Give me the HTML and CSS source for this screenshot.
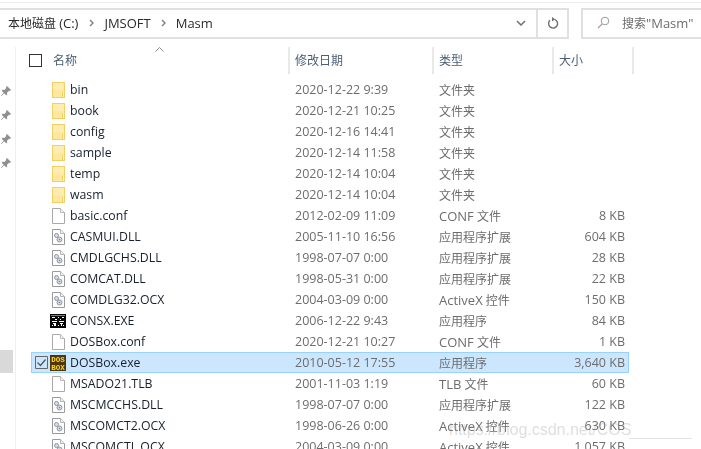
FILE: index.html
```html
<!DOCTYPE html>
<html lang="zh">
<head>
<meta charset="utf-8">
<title>Masm</title>
<link rel="stylesheet" href="styles.css">
</head>
<body>
<svg class="defs" width="0" height="0">
  <symbol id="folder" viewBox="0 0 13 16">
    <path d="M0 0h13v16H0z" fill="#f3d063"/>
    <path d="M1.100 1h10.900v14H1.100z" fill="#fee89f"/>
    <path d="M1.100 1h10.900v7H1.100z" fill="#feecb0"/>
    <path d="M10 10h1v5h-1z" fill="#f3d063"/>
    <path d="M11 9.500h1v5.500h-1z" fill="#fff4c8"/>
  </symbol>
  <symbol id="file" viewBox="0 0 13 16">
    <path d="M.5.500h8l4 4v11H.5z" fill="#fff" stroke="#a9a9a9"/>
    <path d="M8.500.500v4h4" fill="#f2f2f2" stroke="#bcbcbc"/>
  </symbol>
  <symbol id="dll" viewBox="0 0 13 16">
    <path d="M.5.500h8l4 4v11H.5z" fill="#fff" stroke="#9a9a9a"/>
    <path d="M8.500.500v4h4" fill="#f2f2f2" stroke="#b4b4b4"/>
    <circle cx="4.500" cy="6.500" r="2" fill="#d5dde6" stroke="#8c98a5"/>
    <circle cx="7.500" cy="10.500" r="2.500" fill="#d5dde6" stroke="#8c98a5"/>
    <circle cx="7.500" cy="10.500" r=".8" fill="#7c8895"/>
  </symbol>
  <symbol id="consx" viewBox="0 0 16 14">
    <path d="M0 0h16v14H0z" fill="#050505"/>
    <path d="M1 1h14v1H1z" fill="#5b7fe8"/>
    <path d="M2 3h3v1H2zM8 3h1v1H8zM12 3h2v1h-2zM5 5h2v1H5zM10 5h1v1h-1zM2 7h5v1H2zM9 7h5v1H9zM3 9h3v1H3zM10 9h3v1h-3zM4 10h2v2H4zM11 10h1v2h-1zM2 11h1v1H2zM8 11h1v1H8zM13 11h1v1h-1z" fill="#fff"/>
  </symbol>
  <symbol id="pin" viewBox="0 0 10 10">
    <path d="M6 0l4 4-1 1-1-.3-2 2 .2 1.800-.9.900L3.200 7.300.8 9.700 0 10l.3-.8 2.400-2.400L.6 4.700l.9-.9 1.800.2 2-2L5 1z" fill="#8f8f8f"/>
  </symbol>
  <symbol id="chev" viewBox="0 0 5 8">
    <path d="M1 1l3 3-3 3" fill="none" stroke="#7f7f7f" stroke-width="1.400"/>
  </symbol>
</svg>

<div class="top-rule"></div>
<header class="toolbar">
  <nav class="address">
    <span class="crumb">本地磁盘 <span class="lat">(C:)</span></span>
    <svg class="chev"><use href="#chev"/></svg>
    <span class="crumb lat">JMSOFT</span>
    <svg class="chev"><use href="#chev"/></svg>
    <span class="crumb lat">Masm</span>
    <svg class="drop" width="10" height="6" viewBox="0 0 10 6"><path d="M1 1l4 4 4-4" fill="none" stroke="#707070" stroke-width="1.500"/></svg>
  </nav>
  <button class="refresh" type="button" aria-label="刷新">
    <svg width="12" height="13" viewBox="0 0 12 13"><path d="M7.500 2.300A4.500 4.500 0 1 1 3 3.300" fill="none" stroke="#6e6e6e" stroke-width="1.400"/><path d="M5 0v4.400l3-2.200z" fill="#6e6e6e"/></svg>
  </button>
  <div class="search">
    <svg width="13" height="13" viewBox="0 0 13 13"><circle cx="8" cy="5" r="3.800" fill="none" stroke="#9a9a9a"/><path d="M5.200 7.800L1 12" stroke="#b98f8f" stroke-width="1.100"/></svg>
    <span class="search-text">搜索<span class="lat">"Masm"</span></span>
  </div>
</header>

<main class="explorer">
  <aside class="quick">
    <svg class="pin"><use href="#pin"/></svg>
    <svg class="pin"><use href="#pin"/></svg>
    <svg class="pin"><use href="#pin"/></svg>
    <svg class="pin"><use href="#pin"/></svg>
    <div class="quick-sel"></div>
  </aside>
  <section class="list">
    <div class="heads">
      <span class="box"></span>
      <span class="head h-name">名称<svg class="caret" width="9" height="5" viewBox="0 0 9 5"><path d="M.5 4.500l4-4 4 4" fill="none" stroke="#8a8a8a"/></svg></span>
      <span class="head">修改日期</span>
      <span class="head">类型</span>
      <span class="head">大小</span>
    </div>
    <div class="rows">
      <div class="row"><svg class="ico"><use href="#folder"/></svg><span class="name">bin</span><span class="date">2020-12-22 9:39</span><span class="cell">文件夹</span><span class="size"></span></div>
      <div class="row"><svg class="ico"><use href="#folder"/></svg><span class="name">book</span><span class="date">2020-12-21 10:25</span><span class="cell">文件夹</span><span class="size"></span></div>
      <div class="row"><svg class="ico"><use href="#folder"/></svg><span class="name">config</span><span class="date">2020-12-16 14:41</span><span class="cell">文件夹</span><span class="size"></span></div>
      <div class="row"><svg class="ico"><use href="#folder"/></svg><span class="name">sample</span><span class="date">2020-12-14 11:58</span><span class="cell">文件夹</span><span class="size"></span></div>
      <div class="row"><svg class="ico"><use href="#folder"/></svg><span class="name">temp</span><span class="date">2020-12-14 10:04</span><span class="cell">文件夹</span><span class="size"></span></div>
      <div class="row"><svg class="ico"><use href="#folder"/></svg><span class="name">wasm</span><span class="date">2020-12-14 10:04</span><span class="cell">文件夹</span><span class="size"></span></div>
      <div class="row"><svg class="ico"><use href="#file"/></svg><span class="name">basic.conf</span><span class="date">2012-02-09 11:09</span><span class="cell"><span class="lat">CONF</span> 文件</span><span class="size">8 KB</span></div>
      <div class="row"><svg class="ico"><use href="#dll"/></svg><span class="name">CASMUI.DLL</span><span class="date">2005-11-10 16:56</span><span class="cell">应用程序扩展</span><span class="size">604 KB</span></div>
      <div class="row"><svg class="ico"><use href="#dll"/></svg><span class="name">CMDLGCHS.DLL</span><span class="date">1998-07-07 0:00</span><span class="cell">应用程序扩展</span><span class="size">28 KB</span></div>
      <div class="row"><svg class="ico"><use href="#dll"/></svg><span class="name">COMCAT.DLL</span><span class="date">1998-05-31 0:00</span><span class="cell">应用程序扩展</span><span class="size">22 KB</span></div>
      <div class="row"><svg class="ico"><use href="#dll"/></svg><span class="name">COMDLG32.OCX</span><span class="date">2004-03-09 0:00</span><span class="cell"><span class="lat">ActiveX</span> 控件</span><span class="size">150 KB</span></div>
      <div class="row"><svg class="ico-wide"><use href="#consx"/></svg><span class="name">CONSX.EXE</span><span class="date">2006-12-22 9:43</span><span class="cell">应用程序</span><span class="size">84 KB</span></div>
      <div class="row"><svg class="ico"><use href="#file"/></svg><span class="name">DOSBox.conf</span><span class="date">2020-12-21 10:27</span><span class="cell"><span class="lat">CONF</span> 文件</span><span class="size">1 KB</span></div>
      <div class="row selected">
        <span class="tick"><svg width="13" height="13" viewBox="0 0 13 13"><path d="M.5.5h12v12H.5z" fill="none" stroke="#666"/><path d="M2.500 6.500l3 3 5-6" fill="none" stroke="#555" stroke-width="1.200"/></svg></span>
        <svg class="ico-box" viewBox="0 0 16 16">
          <path d="M0 0h16v16H0z" fill="#4f3508"/>
          <text class="dos-text" x="8" y="7">DOS</text>
          <text class="dos-text" x="8" y="14.500">BOX</text>
        </svg><span class="name">DOSBox.exe</span><span class="date">2010-05-12 17:55</span><span class="cell">应用程序</span><span class="size">3,640 KB</span>
      </div>
      <div class="row"><svg class="ico"><use href="#file"/></svg><span class="name">MSADO21.TLB</span><span class="date">2001-11-03 1:19</span><span class="cell"><span class="lat">TLB</span> 文件</span><span class="size">60 KB</span></div>
      <div class="row"><svg class="ico"><use href="#dll"/></svg><span class="name">MSCMCCHS.DLL</span><span class="date">1998-07-07 0:00</span><span class="cell">应用程序扩展</span><span class="size">122 KB</span></div>
      <div class="row"><svg class="ico"><use href="#dll"/></svg><span class="name">MSCOMCT2.OCX</span><span class="date">1998-06-26 0:00</span><span class="cell"><span class="lat">ActiveX</span> 控件</span><span class="size">630 KB</span></div>
      <div class="row"><svg class="ico"><use href="#dll"/></svg><span class="name">MSCOMCTL.OCX</span><span class="date">2004-03-09 0:00</span><span class="cell"><span class="lat">ActiveX</span> 控件</span><span class="size">1,057 KB</span></div>
    </div>
  </section>
</main>
<div class="watermark">https://blog.csdn.net/COS</div>
<div class="watermark-rule"></div>
</body>
</html>
```

FILE: styles.css
```css
* { box-sizing: border-box; }
html, body { margin: 0; height: 449px; overflow: hidden; background: #fff; }
body {
  position: relative;
  font-family: "Open Sans", "Noto Sans CJK SC", sans-serif;
  font-size: 12px;
  color: #1c2430;
  display: flex;
  flex-direction: column;
}
.defs { position: absolute; }
.lat { font-size: 13px; }

.top-rule { height: 1px; margin-top: 2px; background: #ececec; flex: none; }

.toolbar { display: flex; height: 31px; margin-top: 5px; flex: none; filter: blur(.3px); }
.address {
  width: 538px;
  display: flex;
  align-items: center;
  border: 2px solid #e0e0e0;
  border-left: 0;
  padding: 0 0 2px 8px;
  color: #2b2b2b;
}
.crumb { white-space: nowrap; }
.crumb:first-child { margin-right: 1px; }
.chev { width: 5px; height: 8px; margin: 0 10px; }
.drop { margin-left: auto; margin-right: 10px; }
.refresh {
  width: 31px;
  padding: 0;
  background: #fff;
  border: 2px solid #e0e0e0;
  border-left: 0;
  display: flex;
  align-items: center;
  justify-content: center;
}
.search {
  flex: 1;
  margin-left: 12px;
  display: flex;
  align-items: center;
  padding: 0 0 2px 14px;
  gap: 12px;
  border: 2px solid #e0e0e0;
  border-right: 0;
  color: #6d6d6d;
}
.search-text { white-space: nowrap; }

.explorer { display: flex; flex: 1; min-height: 0; margin-top: 8px; filter: blur(.3px); }
.quick {
  width: 16px;
  flex: none;
  border-right: 1px solid #efefef;
  display: flex;
  flex-direction: column;
  align-items: flex-start;
  padding: 39px 0 0 1px;
  gap: 14px;
}
.pin { width: 10px; height: 10px; }
.quick-sel { width: 13px; height: 23px; background: #d9d9d9; margin: 168px 0 0 -1px; flex: none; }

.list { flex: 1; min-width: 0; }
.heads {
  display: grid;
  grid-template-columns: 274px 144px 120px 80px;
  height: 27px;
  position: relative;
}
.box {
  position: absolute;
  left: 13px; top: 7px;
  width: 13px; height: 13px;
  border: 1px solid #333;
}
.head {
  border-right: 2px solid #e9e9e9;
  padding-left: 5px;
  line-height: 27px;
  color: #4c6075;
}
.h-name { position: relative; padding-left: 37px; }
.caret { position: absolute; left: 139px; top: 0; }

.rows { margin-top: 5px; }
.row {
  display: grid;
  grid-template-columns: 18px 225px 144px 114px 72px;
  align-items: center;
  height: 21px;
  margin-left: 15px;
  padding-left: 21px;
  width: 598px;
  color: #6d6d6d;
  position: relative;
}
.ico { width: 13px; height: 16px; }
.ico-wide { width: 16px; height: 14px; margin-left: -2px; }
.ico-box { width: 16px; height: 16px; margin-left: -2px; }
.dos-text {
  font-family: "Liberation Mono", monospace;
  font-size: 7.500px;
  font-weight: 700;
  fill: #f7d92e;
  text-anchor: middle;
}
.name { color: #17202c; white-space: nowrap; font-size: 12.300px; }
.date { white-space: nowrap; font-size: 12.500px; }
.cell { white-space: nowrap; }
.size { text-align: right; white-space: nowrap; font-size: 12.500px; }
.selected {
  background: #cbe6fd;
  box-shadow: inset 0 0 0 1px #99d1ff;
}
.tick { position: absolute; left: 4px; top: 4px; display: flex; }

.watermark {
  position: absolute;
  left: 449px; top: 421px;
  font-family: "Liberation Sans", sans-serif;
  font-size: 16px;
  color: rgba(150,150,150,.33);
  white-space: nowrap;
}
.watermark-rule {
  position: absolute;
  left: 629px; top: 438px;
  width: 63px; height: 1px;
  background: #e4e4e4;
}
```
